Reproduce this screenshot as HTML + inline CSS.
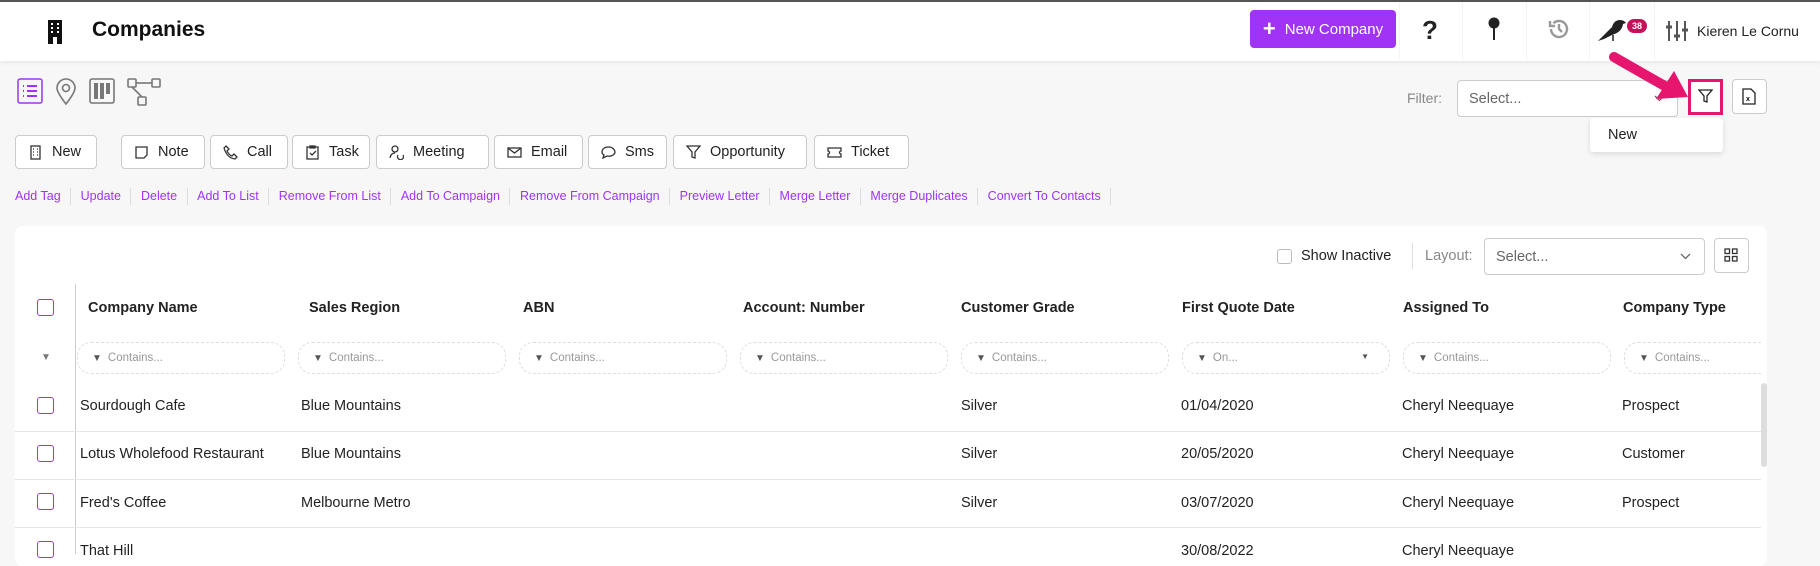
<!DOCTYPE html>
<html><head><meta charset="utf-8"><style>
*{box-sizing:border-box;margin:0;padding:0}
body{width:1820px;height:554px;overflow:hidden;background:#f7f7f7;font-family:"Liberation Sans",sans-serif;color:#222;position:relative}
.a{position:absolute}
.hdr{left:0;top:0;width:1820px;height:61px;background:#fff;border-top:2px solid #555;box-shadow:0 2px 4px rgba(0,0,0,.06)}
.btn{position:absolute;top:135px;height:34px;background:#fff;border:1px solid #ccc;border-radius:4px;font-size:14.5px;display:flex;align-items:center;padding-left:12px;gap:9px;color:#222}
.btn svg{width:15px;height:15px;fill:none;stroke:#333;stroke-width:1.3}
.links{left:15px;top:188px;font-size:12.5px;color:#a033f5;display:flex}
.links span{padding:0 9.5px;border-right:1px solid #ddd;line-height:17px}
.links span:first-child{padding-left:0}
.card{left:15px;top:226px;width:1752px;height:340px;background:#fff;border-radius:8px}
.th{position:absolute;top:300px;font-size:14.5px;font-weight:bold;color:#222}
.fi{position:absolute;top:342px;height:32px;width:208px;border:1px dashed #ddd;border-radius:14px;font-size:11.5px;color:#999;padding:9px 0 0 14px}
.fi b{font-size:10px;color:#555;margin-right:6px}
.td{position:absolute;font-size:14.5px;color:#222}
.cb{position:absolute;left:37px;width:17px;height:17px;border:1.5px solid #a033f5;border-radius:3px}
.rl{position:absolute;left:15px;width:1746px;height:1px;background:#e6e6e6}
.sep{position:absolute;top:2px;width:1px;height:58px;background:#f4f4f4}
</style></head><body>
<div class="a hdr"></div>
<svg class="a" style="left:47px;top:20px" width="16" height="24" viewBox="0 0 16 24"><rect x="1" y="0" width="14" height="24" fill="#111"/><g fill="#fff"><rect x="4" y="3" width="2" height="2"/><rect x="10" y="3" width="2" height="2"/><rect x="4" y="7" width="2" height="2"/><rect x="10" y="7" width="2" height="2"/><rect x="4" y="11" width="2" height="2"/><rect x="10" y="11" width="2" height="2"/><rect x="6" y="17" width="4" height="7"/></g></svg>
<div class="a" style="left:92px;top:18px;font-size:21px;font-weight:bold;color:#111">Companies</div>
<div class="a" style="left:1250px;top:10px;width:146px;height:38px;background:#a033f5;border-radius:4px;color:#fff;font-size:15px;display:flex;align-items:center;justify-content:center"><span style="font-size:22px;margin-right:9px;font-weight:bold">+</span>New Company</div>
<div class="sep" style="left:1399px"></div><div class="sep" style="left:1462px"></div><div class="sep" style="left:1526px"></div><div class="sep" style="left:1589px"></div><div class="sep" style="left:1654px"></div>
<div class="a" style="left:1422px;top:15px;font-size:26px;font-weight:bold;color:#222">?</div>
<svg class="a" style="left:1488px;top:17px" width="12" height="26" viewBox="0 0 12 26"><circle cx="6" cy="6" r="5.5" fill="#222"/><rect x="5" y="10" width="2" height="13" fill="#222"/></svg>
<svg class="a" style="left:1547px;top:17px" width="24" height="24" viewBox="0 0 24 24" fill="none" stroke="#999" stroke-width="2.4"><path d="M4 12a8 8 0 1 0 2.5-5.8"/><path d="M3 4v5h5"/><path d="M12 7v5l3 3"/></svg>
<svg class="a" style="left:1596px;top:17px" width="34" height="26" viewBox="0 0 34 26"><path d="M2 24 L16 10 Q18 3 24 3 Q28 3 30 6 L27 7 Q26 15 16 18 L8 22Z" fill="#222"/><line x1="17" y1="18" x2="17" y2="24" stroke="#222" stroke-width="1.5"/></svg>
<div class="a" style="left:1627px;top:19px;width:20px;height:14px;background:#c6105a;border-radius:7px;color:#fff;font-size:9px;font-weight:bold;text-align:center;line-height:14px">38</div>
<svg class="a" style="left:1665px;top:19px" width="24" height="24" viewBox="0 0 24 24" stroke="#555" stroke-width="2"><line x1="4" y1="2" x2="4" y2="22"/><line x1="12" y1="2" x2="12" y2="22"/><line x1="20" y1="2" x2="20" y2="22"/><line x1="1" y1="8" x2="7" y2="8" stroke-width="3"/><line x1="9" y1="17" x2="15" y2="17" stroke-width="3"/><line x1="17" y1="11" x2="23" y2="11" stroke-width="3"/></svg>
<div class="a" style="left:1697px;top:23px;font-size:14px;color:#222">Kieren Le Cornu</div>
<svg class="a" style="left:17px;top:78px" width="26" height="26" viewBox="0 0 26 26" fill="none" stroke="#a033f5" stroke-width="1.5"><rect x="1" y="1" width="24" height="24" rx="2"/><g stroke-width="2"><line x1="6" y1="8" x2="7" y2="8"/><line x1="10" y1="8" x2="20" y2="8"/><line x1="6" y1="13" x2="7" y2="13"/><line x1="10" y1="13" x2="20" y2="13"/><line x1="6" y1="18" x2="7" y2="18"/><line x1="10" y1="18" x2="20" y2="18"/></g></svg>
<svg class="a" style="left:55px;top:78px" width="22" height="27" viewBox="0 0 22 27" fill="none" stroke="#777" stroke-width="1.6"><path d="M11 26C4 17 2 13 2 10a9 9 0 0 1 18 0c0 3-2 7-9 16z"/><circle cx="11" cy="10" r="3.5"/></svg>
<svg class="a" style="left:89px;top:78px" width="26" height="26" viewBox="0 0 26 26"><rect x="1" y="1" width="24" height="24" rx="2" fill="none" stroke="#777" stroke-width="1.6"/><rect x="5" y="5" width="4" height="16" fill="#777"/><rect x="11" y="5" width="4" height="16" fill="#777"/><rect x="17" y="5" width="4" height="11" fill="#777"/></svg>
<svg class="a" style="left:127px;top:78px" width="34" height="28" viewBox="0 0 34 28" fill="none" stroke="#777" stroke-width="1.6"><rect x="1" y="1" width="8" height="8" rx="1"/><rect x="25" y="1" width="8" height="8" rx="1"/><rect x="11" y="19" width="8" height="8" rx="1"/><line x1="9" y1="5" x2="25" y2="5"/><path d="M5 9 L15 19"/></svg>
<div class="a" style="left:1407px;top:90px;font-size:14px;color:#888">Filter:</div>
<div class="a" style="left:1457px;top:80px;width:221px;height:37px;background:#fff;border:1px solid #ccc;border-radius:4px;font-size:14.5px;color:#666;padding:10px 0 0 11px">Select...</div>
<svg class="a" style="left:1654px;top:95px" width="11" height="7" viewBox="0 0 11 7" fill="none" stroke="#666" stroke-width="1.3"><path d="M1 1l4.5 4.5L10 1"/></svg>
<div class="a" style="left:1688px;top:79px;width:35px;height:36px;background:#fff;border:3px solid #e6166f"></div>
<svg class="a" style="left:1698px;top:89px" width="15" height="15" viewBox="0 0 15 15" fill="none" stroke="#222" stroke-width="1.3"><path d="M1 1h13L9 7v6l-3-1V7z"/></svg>
<div class="a" style="left:1732px;top:79px;width:35px;height:35px;background:#fff;border:1px solid #ccc;border-radius:4px"></div>
<svg class="a" style="left:1742px;top:88px" width="14" height="17" viewBox="0 0 14 17"><path d="M1 1h8l4 4v11H1z" fill="none" stroke="#222" stroke-width="1.3"/><text x="4" y="13" font-size="7" font-weight="bold" font-family="Liberation Sans">x</text></svg>
<div class="a" style="left:1590px;top:118px;width:133px;height:34px;background:#fff;box-shadow:0 2px 6px rgba(0,0,0,.12);border-radius:3px;font-size:14.5px;color:#222;padding:9px 0 0 18px">New</div>
<svg class="a" style="left:1600px;top:45px" width="100" height="60" viewBox="0 0 100 60"><line x1="14" y1="12" x2="70" y2="44" stroke="#e6166f" stroke-width="10" stroke-linecap="round"/><path d="M88 52 L56 54 L74 26 Z" fill="#e6166f"/></svg>
<div class="btn" style="left:15px;width:82px"><svg viewBox="0 0 15 15"><rect x="3" y="1" width="9" height="13"/><path d="M5 4h1M9 4h1M5 7h1M9 7h1M5 10h1M9 10h1"/></svg>New</div>
<div class="btn" style="left:121px;width:84px"><svg viewBox="0 0 15 15"><path d="M2 2h11v8l-3 3H2z"/></svg>Note</div>
<div class="btn" style="left:210px;width:78px"><svg viewBox="0 0 15 15"><path d="M3 1l3 3-2 2q2 4 5 5l2-2 3 3-2 2Q4 13 1 3z"/></svg>Call</div>
<div class="btn" style="left:292px;width:78px"><svg viewBox="0 0 15 15"><rect x="2" y="2" width="11" height="12"/><path d="M5 8l2 2 4-4M5 1h5v2H5z"/></svg>Task</div>
<div class="btn" style="left:376px;width:113px"><svg viewBox="0 0 15 15"><circle cx="6" cy="4" r="3"/><path d="M1 13q1-5 5-5M9 10a3 3 0 1 0 5 0"/></svg>Meeting</div>
<div class="btn" style="left:494px;width:89px"><svg viewBox="0 0 15 15"><rect x="1" y="3" width="13" height="9"/><path d="M1 3l6.5 5L14 3"/></svg>Email</div>
<div class="btn" style="left:588px;width:79px"><svg viewBox="0 0 15 15"><path d="M7.5 2C3 2 1 4.5 1 7q0 2 2 3l-1 3 4-2q1 .2 1.5 .2c4.5 0 6.5-2.5 6.5-4.2S12 2 7.5 2z"/></svg>Sms</div>
<div class="btn" style="left:673px;width:134px"><svg viewBox="0 0 15 15"><path d="M1 1h13L9 7v6l-3-1V7z"/></svg>Opportunity</div>
<div class="btn" style="left:814px;width:95px"><svg viewBox="0 0 15 15"><path d="M1 3h13v3a1.5 1.5 0 0 0 0 3v3H1V9a1.5 1.5 0 0 0 0-3z"/></svg>Ticket</div>
<div class="a links"><span>Add Tag</span><span>Update</span><span>Delete</span><span>Add To List</span><span>Remove From List</span><span>Add To Campaign</span><span>Remove From Campaign</span><span>Preview Letter</span><span>Merge Letter</span><span>Merge Duplicates</span><span>Convert To Contacts</span></div>
<div class="a card"></div>
<div class="a" style="left:1277px;top:249px;width:15px;height:15px;border:1px solid #bbb;border-radius:3px"></div>
<div class="a" style="left:1301px;top:248px;font-size:14.5px;color:#222">Show Inactive</div>
<div class="a" style="left:1412px;top:243px;width:1px;height:26px;background:#ddd"></div>
<div class="a" style="left:1425px;top:248px;font-size:14.5px;color:#888">Layout:</div>
<div class="a" style="left:1484px;top:238px;width:221px;height:37px;background:#fff;border:1px solid #ccc;border-radius:4px;font-size:14.5px;color:#666;padding:10px 0 0 11px">Select...</div>
<svg class="a" style="left:1680px;top:253px" width="11" height="7" viewBox="0 0 11 7" fill="none" stroke="#666" stroke-width="1.3"><path d="M1 1l4.5 4.5L10 1"/></svg>
<div class="a" style="left:1714px;top:238px;width:35px;height:35px;background:#fff;border:1px solid #ccc;border-radius:4px"></div>
<svg class="a" style="left:1724px;top:248px" width="14" height="14" viewBox="0 0 14 14" fill="none" stroke="#333" stroke-width="1.3"><rect x="1" y="1" width="4.5" height="4.5"/><rect x="8.5" y="1" width="4.5" height="4.5"/><rect x="1" y="8.5" width="4.5" height="4.5"/><rect x="8.5" y="8.5" width="4.5" height="4.5"/></svg>
<div class="a" style="left:75px;top:284px;width:1px;height:270px;background:#ccc"></div>
<div class="cb" style="top:299px"></div>
<div class="th" style="left:88px">Company Name</div><div class="th" style="left:309px">Sales Region</div><div class="th" style="left:523px">ABN</div><div class="th" style="left:743px">Account: Number</div><div class="th" style="left:961px">Customer Grade</div><div class="th" style="left:1182px">First Quote Date</div><div class="th" style="left:1403px">Assigned To</div><div class="th" style="left:1623px">Company Type</div>
<div class="a" style="left:41px;top:352px;font-size:10px;color:#777">▼</div>
<div class="fi" style="left:77px"><b>▼</b>Contains...</div><div class="fi" style="left:298px"><b>▼</b>Contains...</div><div class="fi" style="left:519px"><b>▼</b>Contains...</div><div class="fi" style="left:740px"><b>▼</b>Contains...</div><div class="fi" style="left:961px"><b>▼</b>Contains...</div><div class="fi" style="left:1182px"><b>▼</b>On...<b style="position:absolute;right:14px;top:9px;font-size:8px">▼</b></div><div class="fi" style="left:1403px"><b>▼</b>Contains...</div><div class="fi" style="left:1624px;width:137px;border-right:none;border-radius:14px 0 0 14px"><b>▼</b>Contains...</div>
<div class="a" style="left:1761px;top:383px;width:6px;height:84px;background:#ddd;border-radius:3px"></div>
<div class="cb" style="top:397px"></div><div class="cb" style="top:445px"></div><div class="cb" style="top:493px"></div><div class="cb" style="top:541px"></div>
<div class="rl" style="top:431px"></div><div class="rl" style="top:479px"></div><div class="rl" style="top:527px"></div>
<div class="td" style="left:80px;top:398px">Sourdough Cafe</div><div class="td" style="left:301px;top:398px">Blue Mountains</div><div class="td" style="left:961px;top:398px">Silver</div><div class="td" style="left:1181px;top:398px">01/04/2020</div><div class="td" style="left:1402px;top:398px">Cheryl Neequaye</div><div class="td" style="left:1622px;top:398px">Prospect</div>
<div class="td" style="left:80px;top:446px">Lotus Wholefood Restaurant</div><div class="td" style="left:301px;top:446px">Blue Mountains</div><div class="td" style="left:961px;top:446px">Silver</div><div class="td" style="left:1181px;top:446px">20/05/2020</div><div class="td" style="left:1402px;top:446px">Cheryl Neequaye</div><div class="td" style="left:1622px;top:446px">Customer</div>
<div class="td" style="left:80px;top:495px">Fred's Coffee</div><div class="td" style="left:301px;top:495px">Melbourne Metro</div><div class="td" style="left:961px;top:495px">Silver</div><div class="td" style="left:1181px;top:495px">03/07/2020</div><div class="td" style="left:1402px;top:495px">Cheryl Neequaye</div><div class="td" style="left:1622px;top:495px">Prospect</div>
<div class="td" style="left:80px;top:543px">That Hill</div><div class="td" style="left:1181px;top:543px">30/08/2022</div><div class="td" style="left:1402px;top:543px">Cheryl Neequaye</div>
</body></html>
